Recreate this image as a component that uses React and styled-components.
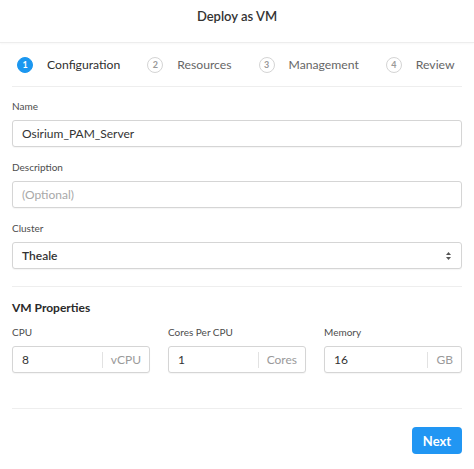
import React from "react";
import styled, { createGlobalStyle } from "styled-components";

const GlobalStyle = createGlobalStyle`
  body {
    margin: 0;
    background: #ffffff;
    font-family: Lato, "Open Sans", sans-serif;
    color: #333333;
  }
  * {
    box-sizing: border-box;
  }
`;

const Dialog = styled.div`
  width: 474px;
  height: 469px;
  background: #ffffff;
`;

const Header = styled.div`
  height: 43px;
  padding-top: 8px;
  text-align: center;
  font-size: 13px;
  line-height: 16px;
  font-weight: 600;
  color: #333;
  border-bottom: 1px solid #ededed;
  box-shadow: 0 1px 2px rgba(0, 0, 0, 0.03);
`;

const Steps = styled.div`
  display: flex;
  align-items: center;
  gap: 27px;
  height: 43px;
  padding-left: 17px;
`;

const Step = styled.div`
  display: flex;
  align-items: center;
  gap: 14px;
  font-size: 12.2px;
  color: ${(p) => (p.active ? "#2f2f2f" : "#666")};
`;

const StepNum = styled.span`
  width: 16px;
  height: 16px;
  border-radius: 50%;
  display: flex;
  align-items: center;
  justify-content: center;
  font-size: 9px;
  font-weight: 700;
  background: ${(p) => (p.active ? "#1b97f0" : "#fff")};
  color: ${(p) => (p.active ? "#fff" : "#999")};
  border: 1px solid ${(p) => (p.active ? "#1b97f0" : "#d4d4d4")};
`;

const Divider = styled.hr`
  margin: 0 12px;
  border: 0;
  border-top: 1px solid #eeeeee;
`;

const Form = styled.div`
  padding: 12px 12px 0;
`;

const Label = styled.div`
  font-size: 10px;
  line-height: 14px;
  color: #4d4d4d;
  margin-bottom: 7px;
`;

const Field = styled.div`
  margin-bottom: ${(p) => p.space || 13}px;
`;

const Box = styled.div`
  display: flex;
  align-items: center;
  height: 27px;
  border: 1px solid #d5d5d5;
  border-radius: 3px;
  box-shadow: 0 1px 1px rgba(0, 0, 0, 0.04);
  background: #fff;
`;

const Value = styled.span`
  flex: 1;
  padding-left: 9px;
  font-size: 12px;
  color: ${(p) => (p.placeholder ? "#a8a8a8" : "#333")};
  font-weight: ${(p) => (p.strong ? 600 : 400)};
`;

const Arrow = styled.span`
  display: flex;
  flex-direction: column;
  gap: 2px;
  margin-right: 10px;
`;

const Suffix = styled.span`
  display: flex;
  align-items: center;
  height: 16px;
  padding: 0 8px;
  border-left: 1px solid #e2e2e2;
  font-size: 12px;
  color: #9a9a9a;
`;

const Section = styled.div`
  padding: 13px 12px 0;
`;

const SectionTitle = styled.div`
  font-size: 12px;
  line-height: 16px;
  font-weight: 700;
  color: #2a2a2a;
  margin-bottom: 9px;
`;

const Grid = styled.div`
  display: grid;
  grid-template-columns: repeat(3, 1fr);
  gap: 18px;
  margin-bottom: 35px;
`;

const Footer = styled.div`
  display: flex;
  justify-content: flex-end;
  padding: 18px 12px 0;
`;

const NextButton = styled.button`
  width: 50px;
  height: 27px;
  border: 0;
  border-radius: 4px;
  background: #2196f3;
  color: #fff;
  font-family: inherit;
  font-size: 13px;
  font-weight: 700;
`;

const steps = ["Configuration", "Resources", "Management", "Review"];

const props = [
  { label: "CPU", value: "8", unit: "vCPU" },
  { label: "Cores Per CPU", value: "1", unit: "Cores" },
  { label: "Memory", value: "16", unit: "GB" },
];

export default function App() {
  return (
    <Dialog>
      <GlobalStyle />
      <Header>Deploy as VM</Header>
      <Steps>
        {steps.map((s, i) => (
          <Step key={s} active={i === 0}>
            <StepNum active={i === 0}>{i + 1}</StepNum>
            {s}
          </Step>
        ))}
      </Steps>
      <Divider />
      <Form>
        <Field>
          <Label>Name</Label>
          <Box>
            <Value>Osirium_PAM_Server</Value>
          </Box>
        </Field>
        <Field>
          <Label>Description</Label>
          <Box>
            <Value placeholder="1">(Optional)</Value>
          </Box>
        </Field>
        <Field space={17}>
          <Label>Cluster</Label>
          <Box>
            <Value strong>Theale</Value>
            <Arrow>
              <svg width="5" height="3" viewBox="0 0 5 3">
                <path d="M0 3 L2.5 0 L5 3 Z" fill="#555" />
              </svg>
              <svg width="5" height="3" viewBox="0 0 5 3">
                <path d="M0 0 L2.5 3 L5 0 Z" fill="#555" />
              </svg>
            </Arrow>
          </Box>
        </Field>
      </Form>
      <Divider />
      <Section>
        <SectionTitle>VM Properties</SectionTitle>
        <Grid>
          {props.map((p) => (
            <div key={p.label}>
              <Label>{p.label}</Label>
              <Box>
                <Value>{p.value}</Value>
                <Suffix>{p.unit}</Suffix>
              </Box>
            </div>
          ))}
        </Grid>
      </Section>
      <Divider />
      <Footer>
        <NextButton>Next</NextButton>
      </Footer>
    </Dialog>
  );
}
